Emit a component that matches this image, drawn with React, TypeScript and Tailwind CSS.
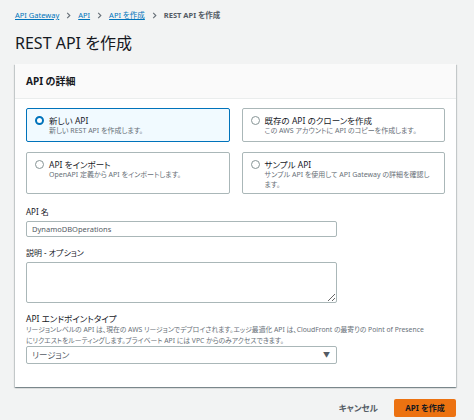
import React, { useState } from "react";

type ApiOption = {
  id: string;
  title: string;
  description: string;
};

const options: ApiOption[] = [
  { id: "new", title: "新しい API", description: "新しい REST API を作成します。" },
  { id: "clone", title: "既存の API のクローンを作成", description: "この AWS アカウントに API のコピーを作成します。" },
  { id: "import", title: "API をインポート", description: "OpenAPI 定義から API をインポートします。" },
  { id: "sample", title: "サンプル API", description: "サンプル API を使用して API Gateway の詳細を確認します。" },
];

function Radio({ checked }: { checked: boolean }) {
  return checked ? (
    <span className="mt-[1px] h-[9px] w-[9px] shrink-0 rounded-full border-[2.5px] border-[#0073bb] bg-white" />
  ) : (
    <span className="mt-[1px] h-[9px] w-[9px] shrink-0 rounded-full border border-[#879596] bg-white" />
  );
}

function Chevron() {
  return (
    <svg viewBox="0 0 8 8" className="mx-[6px] h-[7px] w-[7px] text-[#687078]">
      <path d="M2.5 1l3 3-3 3" fill="none" stroke="currentColor" strokeWidth="1.3" />
    </svg>
  );
}

export default function App() {
  const [selected, setSelected] = useState("new");
  const [name, setName] = useState("DynamoDBOperations");

  return (
    <div className="h-[420px] w-[474px] overflow-hidden bg-[#f2f3f3] px-[15px] pt-[9px] font-['Noto_Sans','Noto_Sans_CJK_JP',sans-serif] text-[#16191f] [font-feature-settings:'palt']">
      {/* Breadcrumb */}
      <div className="flex h-[12px] items-center text-[7.5px] leading-[12px]">
        <span className="text-[#0073bb] underline">API Gateway</span>
        <Chevron />
        <span className="text-[#0073bb] underline">API</span>
        <Chevron />
        <span className="text-[#0073bb] underline">API を作成</span>
        <Chevron />
        <span className="font-bold text-[#545b64]">REST API を作成</span>
      </div>

      <h1 className="mt-[11px] text-[16px] leading-[22px] font-normal">REST API を作成</h1>

      {/* Panel */}
      <div className="mt-[10px] w-[441px] bg-white shadow-[0_1px_1px_0_rgba(0,28,36,0.3),1px_1px_1px_0_rgba(0,28,36,0.15),-1px_1px_1px_0_rgba(0,28,36,0.15)]">
        <div className="flex h-[35px] items-center border-b border-[#eaeded] bg-[#fafafa] px-[11px]">
          <h2 className="text-[10px] font-bold">API の詳細</h2>
        </div>

        <div className="px-[11px] pt-[9px] pb-[23px]">
          <div className="grid grid-cols-2 grid-rows-[34px_42px] gap-x-[12px] gap-y-[10px]">
            {options.map((o) => {
              const on = selected === o.id;
              return (
                <button
                  key={o.id}
                  type="button"
                  onClick={() => setSelected(o.id)}
                  className={
                    on
                      ? "flex items-start gap-[5px] rounded-[2px] border border-[#0073bb] bg-[#f1faff] pt-[6px] pr-[11px] pl-[8px] text-left"
                      : "flex items-start gap-[5px] rounded-[2px] border border-[#aab7b8] bg-white pt-[6px] pr-[11px] pl-[8px] text-left"
                  }
                >
                  <Radio checked={on} />
                  <div className="min-w-0">
                    <div className="text-[8.5px] leading-[11px]">{o.title}</div>
                    <div className="text-[7px] leading-[10px] text-[#687078]">{o.description}</div>
                  </div>
                </button>
              );
            })}
          </div>

          {/* API name */}
          <label className="mt-[12px] block text-[8px] leading-[11px]">API 名</label>
          <input
            value={name}
            onChange={(e) => setName(e.target.value)}
            className="mt-[4px] block h-[16px] w-[311px] rounded-[2px] border border-[#aab7b8] px-[5px] text-[7.5px] text-[#545b64] outline-none"
          />

          {/* Description */}
          <label className="mt-[10px] block text-[8px] leading-[11px]">説明 - オプション</label>
          <textarea className="mt-[4px] block h-[41px] w-[311px] rounded-[2px] border border-[#aab7b8] px-[5px] text-[8px] outline-none" />

          {/* Endpoint type */}
          <label className="mt-[10px] block text-[8.5px] leading-[11px]">API エンドポイントタイプ</label>
          <p className="text-[6.8px] leading-[11px] whitespace-nowrap text-[#687078]">
            リージョンレベルの API は、現在の AWS リージョンでデプロイされます。エッジ最適化 API は、CloudFront の最寄りの Point of Presence
            <br />
            にリクエストをルーティングします。プライベート API には VPC からのみアクセスできます。
          </p>
          <div className="flex h-[18px] w-[311px] items-center justify-between rounded-[2px] border border-[#aab7b8] bg-white pr-[6px] pl-[5px]">
            <span className="text-[8.5px] text-[#545b64]">リージョン</span>
            <span className="text-[7px] text-[#545b64]">▼</span>
          </div>
        </div>
      </div>

      {/* Footer */}
      <div className="mt-[12px] flex w-[441px] items-center justify-end gap-[16px]">
        <button type="button" className="text-[8.5px] font-bold text-[#545b64]">
          キャンセル
        </button>
        <button type="button" className="h-[18px] w-[62px] rounded-[2px] bg-[#ec7211] text-[8px] font-bold text-[#16191f]">
          API を作成
        </button>
      </div>
    </div>
  );
}
